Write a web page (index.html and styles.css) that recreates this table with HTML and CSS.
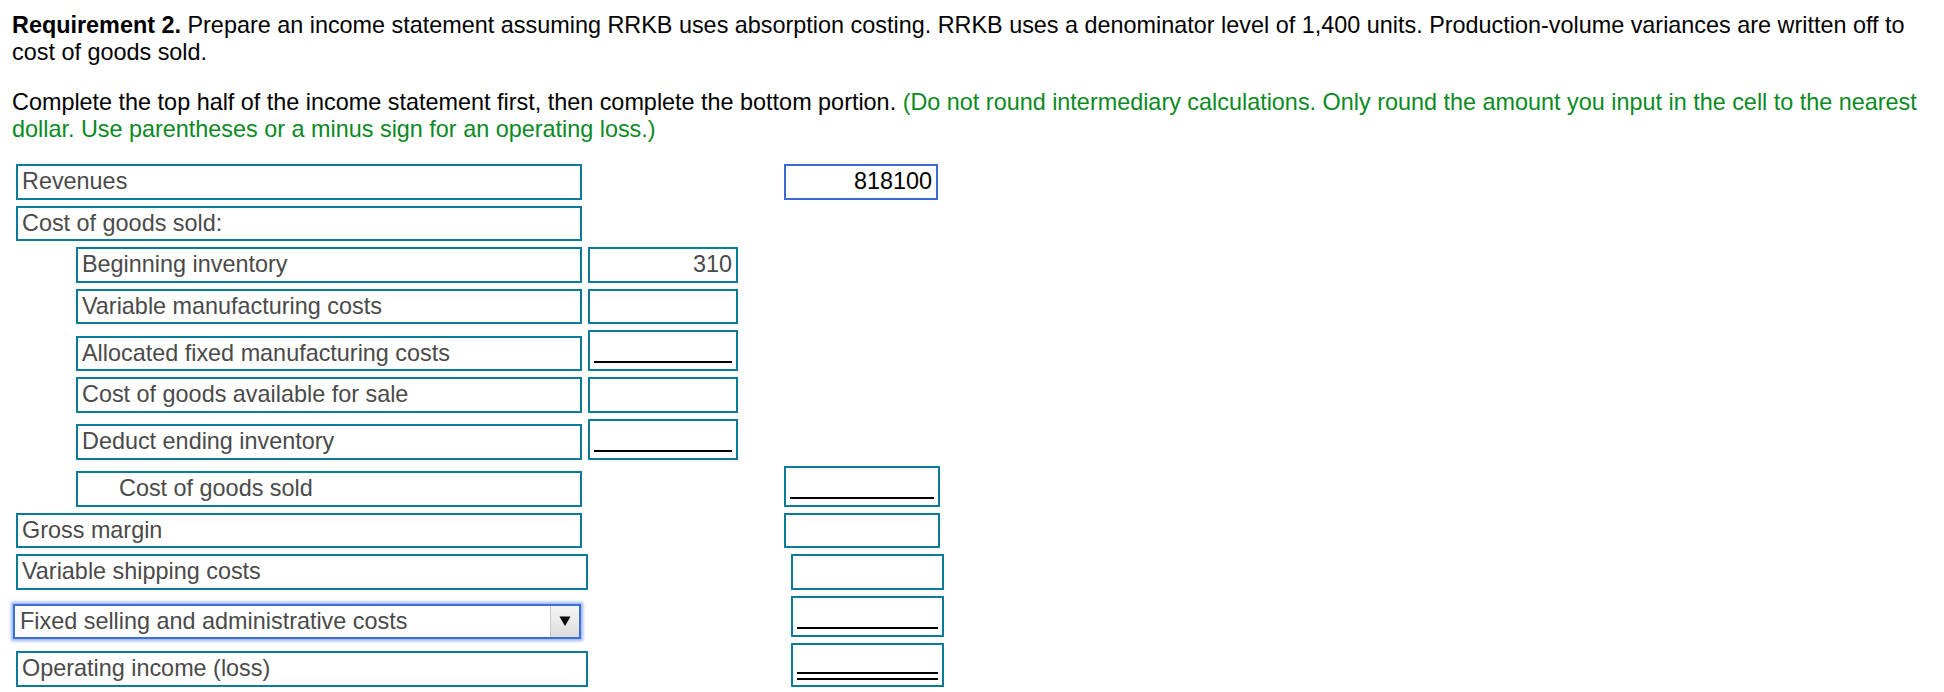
FILE: index.html
```html
<!DOCTYPE html>
<html>
<head>
<meta charset="utf-8">
<link rel="stylesheet" href="styles.css">
</head>
<body>
<div class="page">
  <p class="text"><b>Requirement 2.</b> Prepare an income statement assuming RRKB uses absorption costing. RRKB uses a denominator level of 1,400 units. Production-volume variances are written off to cost of goods sold.</p>
  <p class="text">Complete the top half of the income statement first, then complete the bottom portion. <span class="hint">(Do not round intermediary calculations. Only round the amount you input in the cell to the nearest dollar. Use parentheses or a minus sign for an operating loss.)</span></p>

  <div class="stmt">
    <div class="row">
      <div class="box lbl">Revenues</div>
      <div></div>
      <div class="box rt-box rev num">818100</div>
    </div>
    <div class="row">
      <div class="box lbl">Cost of goods sold:</div>
      <div></div>
      <div></div>
    </div>
    <div class="row">
      <div class="box lbl indent">Beginning inventory</div>
      <div class="box mid-box num">310</div>
      <div></div>
    </div>
    <div class="row">
      <div class="box lbl indent">Variable manufacturing costs</div>
      <div class="box mid-box"></div>
      <div></div>
    </div>
    <div class="row">
      <div class="box lbl indent">Allocated fixed manufacturing costs</div>
      <div class="box mid-box tall"><div class="rule"></div></div>
      <div></div>
    </div>
    <div class="row">
      <div class="box lbl indent">Cost of goods available for sale</div>
      <div class="box mid-box"></div>
      <div></div>
    </div>
    <div class="row">
      <div class="box lbl indent">Deduct ending inventory</div>
      <div class="box mid-box tall"><div class="rule"></div></div>
      <div></div>
    </div>
    <div class="row">
      <div class="box lbl indent total">Cost of goods sold</div>
      <div></div>
      <div class="box rt-box wide-rt tall"><div class="rule"></div></div>
    </div>
    <div class="row">
      <div class="box lbl">Gross margin</div>
      <div></div>
      <div class="box rt-box wide-rt"></div>
    </div>
    <div class="row">
      <div class="box lbl wide">Variable shipping costs</div>
      <div></div>
      <div class="box rt-box shift"></div>
    </div>
    <div class="row">
      <div class="select">
        <span class="select-text">Fixed selling and administrative costs</span>
        <span class="select-btn"><svg width="12" height="12" viewBox="0 0 12 12"><polygon points="0.5,1.5 11.5,1.5 6,11" fill="#000"/></svg></span>
      </div>
      <div></div>
      <div class="box rt-box shift tall"><div class="rule"></div></div>
    </div>
    <div class="row">
      <div class="box lbl wide">Operating income (loss)</div>
      <div></div>
      <div class="box rt-box shift tall xl"><div class="rule dbl"></div></div>
    </div>
  </div>
</div>
</body>
</html>
```

FILE: styles.css
```css
* { box-sizing: border-box; }

body {
  margin: 0;
  background: #ffffff;
  font-family: "Liberation Sans", Arial, Helvetica, sans-serif;
}

.page {
  padding: 12px 12px 0 12px;
}

.text {
  margin: 0;
  font-size: 23.4px;
  line-height: 27px;
  color: #000000;
}

.text + .text {
  margin-top: 23px;
}

.hint {
  color: #0a8a1f;
}

.stmt {
  margin: 21px 0 0 4px;
  display: flex;
  flex-direction: column;
  gap: 6px;
}

.row {
  display: grid;
  grid-template-columns: 572px 196px 170px;
  align-items: end;
}

.box {
  height: 35.5px;
  border: 2px solid #0b7a9b;
  font-size: 23.4px;
  line-height: 31px;
  color: #4a4a4a;
  padding: 0 4px;
  white-space: nowrap;
  background: #ffffff;
}

.lbl { width: 566px; }
.lbl.indent { margin-left: 60px; width: 506px; }
.lbl.wide { width: 572px; }
.lbl.total { padding-left: 41px; }

.mid-box { width: 150px; }

.rt-box { width: 154px; }
.rt-box.wide-rt { width: 156px; }
.rt-box.shift { margin-left: 7px; width: 153px; }

.num {
  text-align: right;
  padding-right: 4px;
}

.rev {
  border-color: #3a6bd0;
  color: #000000;
}

.tall {
  height: 41px;
  display: flex;
  flex-direction: column;
  justify-content: flex-end;
  padding: 0 4px 6px;
}

.tall.xl {
  height: 44px;
  padding-bottom: 5px;
}

.rule {
  border-top: 2px solid #000000;
}

.rule.dbl {
  height: 8px;
  border-bottom: 2px solid #000000;
}

.select {
  width: 568px;
  height: 35px;
  margin-left: -3px;
  margin-bottom: -2px;
  border: 2px solid #3d6fd6;
  box-shadow: 0 0 3px 2px rgba(70, 120, 225, 0.55);
  display: flex;
  align-items: center;
  justify-content: space-between;
  background: #ffffff;
  padding: 1px 0 1px 5px;
}

.select-text {
  font-size: 23.4px;
  line-height: 31px;
  color: #4a4a4a;
  white-space: nowrap;
}

.select-btn {
  width: 29px;
  height: 31px;
  display: flex;
  align-items: center;
  justify-content: center;
  background: linear-gradient(#f6f6f6, #dcdcdc);
  border-left: 1px solid #c8c8c8;
}
```
